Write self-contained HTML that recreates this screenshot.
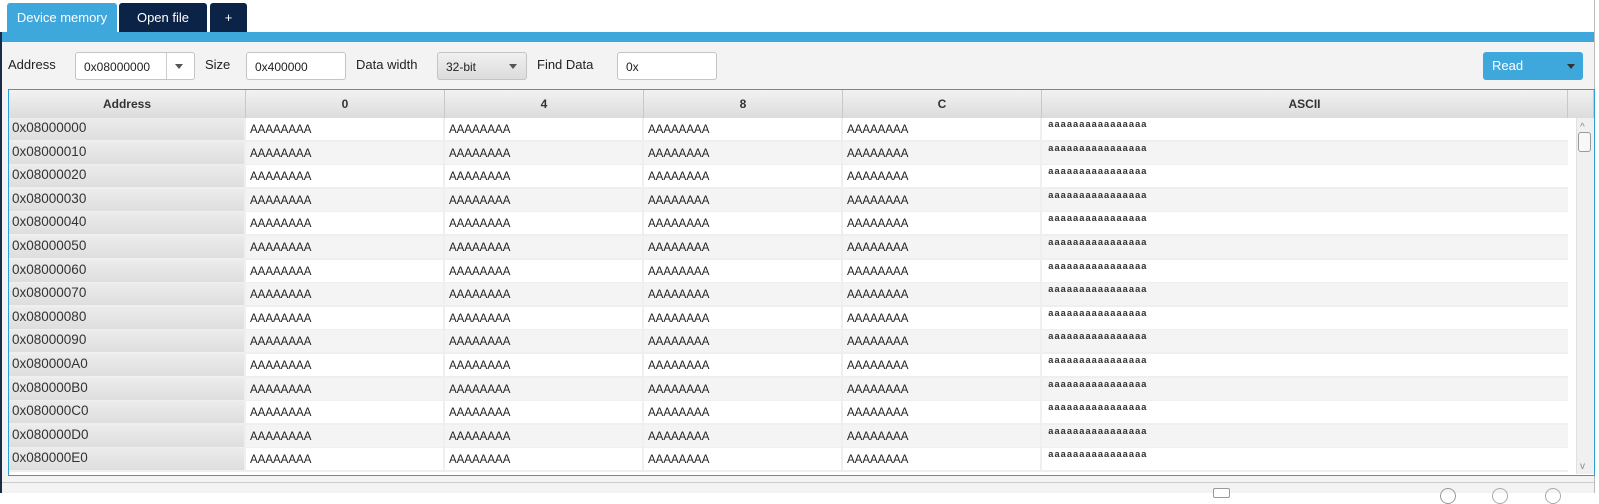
<!DOCTYPE html>
<html><head><meta charset="utf-8"><style>
*{box-sizing:border-box;margin:0;padding:0}
body{width:1599px;height:493px;overflow:hidden;background:#fff;font-family:"Liberation Sans",sans-serif;position:relative}
.abs{position:absolute}
.tab{position:absolute;top:3px;height:29px;color:#fff;font-size:13px;line-height:29px;text-align:center;border-radius:3px 3px 0 0}
.lbl{position:absolute;font-size:13px;color:#222;top:57px}
.fld{position:absolute;top:52px;height:28px;background:#fff;border:1px solid #c4c4c4;border-radius:3px;font-size:12px;color:#222;line-height:28px;padding-left:8px}
.cmb{background:linear-gradient(#f0f0f0,#dcdcdc)}
.tri{position:absolute;width:0;height:0;border-left:4px solid transparent;border-right:4px solid transparent;border-top:5px solid #555;top:11px}
.row{position:absolute;left:9px;height:24px;width:1559px}
.c{position:absolute;top:0;height:22px;font-size:11.5px;color:#222;padding-left:4px;line-height:24px}
.ad{left:0;width:235px;background:linear-gradient(#ececec,#dedede);font-size:13.5px;color:#333;padding-left:3px;line-height:20px}
.as{font-family:"Liberation Mono",monospace;font-size:9.5px;font-weight:bold;color:#333;letter-spacing:0.5px;line-height:14px;padding-left:6px}
.hd{position:absolute;top:90px;height:28px;background:linear-gradient(#f2f2f2,#dcdcdc);border-right:1px solid #c8c8c8;font-size:12px;font-weight:bold;color:#333;text-align:center;line-height:28px}
</style></head><body>
<div class="abs" style="left:0;top:32px;width:2px;height:461px;background:#1a2b45"></div>
<div class="tab" style="left:7px;width:110px;background:#3ea7db">Device memory</div>
<div class="tab" style="left:119px;width:88px;background:#0b2347">Open file</div>
<div class="tab" style="left:210px;width:37px;background:#0b2347">+</div>
<div class="abs" style="left:2px;top:32px;width:1592px;height:10px;background:#3ea7db"></div>
<div class="abs" style="left:2px;top:42px;width:1592px;height:451px;background:#f3f3f3"></div>
<div class="abs" style="left:1594px;top:0;width:1px;height:493px;background:#bbb"></div>

<div class="lbl" style="left:8px">Address</div>
<div class="fld" style="left:75px;width:120px">0x08000000<div class="abs" style="left:90px;top:0;width:1px;height:26px;background:#ccc"></div><div class="tri" style="left:99px"></div></div>
<div class="lbl" style="left:205px">Size</div>
<div class="fld" style="left:246px;width:100px">0x400000</div>
<div class="lbl" style="left:356px">Data width</div>
<div class="fld cmb" style="left:437px;width:90px">32-bit<div class="tri" style="left:71px"></div></div>
<div class="lbl" style="left:537px">Find Data</div>
<div class="fld" style="left:617px;width:100px">0x</div>
<div class="abs" style="left:1483px;top:52px;width:100px;height:28px;background:#3ea7db;border-radius:3px;color:#fff;font-size:13px;line-height:28px;padding-left:9px">Read<div class="tri" style="left:84px;border-top-color:#333;top:12px"></div></div>

<div class="abs" style="left:8px;top:89px;width:1587px;height:387px;border:1.5px solid #2aa0d4;background:#fff"></div>
<div class="hd" style="left:9px;width:237px">Address</div>
<div class="hd" style="left:246px;width:199px">0</div>
<div class="hd" style="left:445px;width:199px">4</div>
<div class="hd" style="left:644px;width:199px">8</div>
<div class="hd" style="left:843px;width:199px">C</div>
<div class="hd" style="left:1042px;width:526px">ASCII</div>
<div class="hd" style="left:1568px;width:26px"></div>
<div class="abs" style="left:9px;top:118px;width:1559px;height:356px;overflow:hidden" id="tb"></div>
<div class="abs" style="left:1576px;top:118px;width:18px;height:356px;background:#f0f0f0;border-left:1px solid #e0e0e0"></div>
<div class="abs" style="left:1580px;top:122px;color:#888;font-size:10px">^</div>
<div class="abs" style="left:1578px;top:132px;width:13px;height:20px;border:1px solid #999;border-radius:3px;background:#f8f8f8"></div>
<div class="abs" style="left:1580px;top:461px;color:#888;font-size:10px">v</div>
<div class="abs" style="left:2px;top:482px;width:1592px;height:1px;background:#ccc"></div>
<div class="abs" style="left:1213px;top:488px;width:17px;height:10px;border:1px solid #999;border-radius:2px;background:#fff"></div>
<div class="abs" style="left:1440px;top:488px;width:16px;height:16px;border:1px solid #999;border-radius:50%"></div>
<div class="abs" style="left:1492px;top:488px;width:16px;height:16px;border:1px solid #aaa;border-radius:50%"></div>
<div class="abs" style="left:1545px;top:488px;width:16px;height:16px;border:1px solid #aaa;border-radius:50%"></div>
<script>
var h='',hx='0123456789ABCDEF';
for(var i=0;i<15;i++){var bg=i%2?'#f4f4f4':'#fff';
h+='<div class="row" style="left:0;top:'+(i*23.6)+'px;background:#efefef">'+
'<div class="c ad">0x080000'+hx[i]+'0</div>';
[237,436,635,834].forEach(function(x){h+='<div class="c" style="left:'+x+'px;width:197px;background:'+bg+'">AAAAAAAA</div>'});
h+='<div class="c as" style="left:1033px;width:526px;background:'+bg+'">aaaaaaaaaaaaaaaa</div></div>';}
document.getElementById('tb').innerHTML=h;
</script>
</body></html>
